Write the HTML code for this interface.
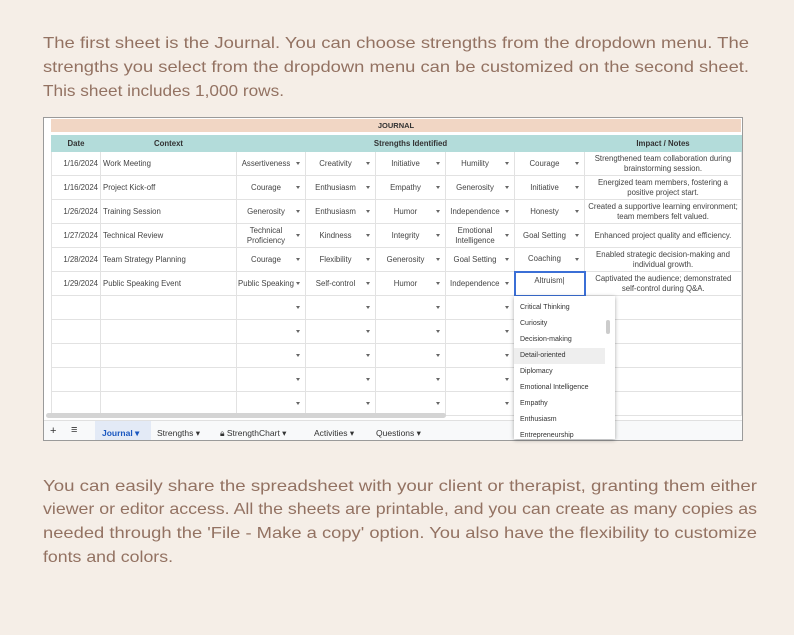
<!DOCTYPE html>
<html><head><style>
*{margin:0;padding:0;box-sizing:border-box}
body{width:794px;height:635px;background:#f5eee7;position:relative;overflow:hidden;font-family:"Liberation Sans",sans-serif}
svg.p{position:absolute;left:0;top:0}
.box{position:absolute;left:43px;top:117px;width:700px;height:324px;background:#fff;border:1px solid #9a9a9a;overflow:hidden}
.jb{position:absolute;left:7px;top:1px;width:690px;height:13px;background:#f1d6c4;font-size:7.5px;font-weight:bold;color:#333;text-align:center;line-height:13px}
table{position:absolute;left:7px;top:17px;border-collapse:collapse;table-layout:fixed;font-size:7.8px;color:#444}
td{border:1px solid #e2e2e2;height:24px;position:relative;text-align:center;line-height:10px;padding:0 2px}
tr.h td{height:16px;background:#b3dcda;font-weight:bold;color:#333;border-color:#b3dcda}
td.l{text-align:left}
td.r{text-align:right}
td.d::after{content:"";position:absolute;right:5px;top:10px;border:2.5px solid transparent;border-top:3px solid #666}
td.d{padding-right:12px}
td.nw{white-space:nowrap;padding-left:0;padding-right:10px}
.tabs{position:absolute;left:0;top:302px;width:700px;height:22px;background:#f8f9fa;border-top:1px solid #e0e0e0;font-size:8.5px;color:#333}
.tabs span{position:absolute;top:7px}
.sb{position:absolute;left:2px;top:295px;width:400px;height:5px;background:#d4d4d4;border-radius:3px}
.dd{position:absolute;left:514px;top:296px;width:101px;height:143px;background:#fff;box-shadow:0 1px 4px rgba(0,0,0,.35);font-size:7px;color:#333;overflow:hidden}
.dd div{height:16px;line-height:16px;padding-left:6px}
</style></head><body>
<svg class="p" width="794" height="635" font-family="Liberation Sans, sans-serif" font-size="16" fill="#937262">
<text x="43" y="48" textLength="706" lengthAdjust="spacingAndGlyphs">The first sheet is the Journal. You can choose strengths from the dropdown menu. The</text>
<text x="43" y="72" textLength="706" lengthAdjust="spacingAndGlyphs">strengths you select from the dropdown menu can be customized on the second sheet.</text>
<text x="43" y="96" textLength="241" lengthAdjust="spacingAndGlyphs">This sheet includes 1,000 rows.</text>
<text x="43" y="491" textLength="714" lengthAdjust="spacingAndGlyphs">You can easily share the spreadsheet with your client or therapist, granting them either</text>
<text x="43" y="514" textLength="714" lengthAdjust="spacingAndGlyphs">viewer or editor access. All the sheets are printable, and you can create as many copies as</text>
<text x="43" y="538" textLength="714" lengthAdjust="spacingAndGlyphs">needed through the 'File - Make a copy' option. You also have the flexibility to customize</text>
<text x="43" y="562" textLength="130" lengthAdjust="spacingAndGlyphs">fonts and colors.</text>
</svg>
<div class="box">
<div class="jb">JOURNAL</div>
<table>
<colgroup><col style="width:49px"><col style="width:136px"><col style="width:69px"><col style="width:70px"><col style="width:70px"><col style="width:69px"><col style="width:70px"><col style="width:157px"></colgroup>
<tr class="h"><td>Date</td><td>Context</td><td colspan="5" style="text-align:center">Strengths Identified</td><td>Impact / Notes</td></tr>
<tr><td class="r">1/16/2024</td><td class="l">Work Meeting</td><td class="d">Assertiveness</td><td class="d">Creativity</td><td class="d">Initiative</td><td class="d">Humility</td><td class="d">Courage</td><td>Strengthened team collaboration during brainstorming session.</td></tr>
<tr><td class="r">1/16/2024</td><td class="l">Project Kick-off</td><td class="d">Courage</td><td class="d">Enthusiasm</td><td class="d">Empathy</td><td class="d">Generosity</td><td class="d">Initiative</td><td>Energized team members, fostering a positive project start.</td></tr>
<tr><td class="r">1/26/2024</td><td class="l">Training Session</td><td class="d">Generosity</td><td class="d">Enthusiasm</td><td class="d">Humor</td><td class="d">Independence</td><td class="d">Honesty</td><td>Created a supportive learning environment; team members felt valued.</td></tr>
<tr><td class="r">1/27/2024</td><td class="l">Technical Review</td><td class="d">Technical Proficiency</td><td class="d">Kindness</td><td class="d">Integrity</td><td class="d">Emotional Intelligence</td><td class="d">Goal Setting</td><td>Enhanced project quality and efficiency.</td></tr>
<tr><td class="r">1/28/2024</td><td class="l">Team Strategy Planning</td><td class="d">Courage</td><td class="d">Flexibility</td><td class="d">Generosity</td><td class="d">Goal Setting</td><td class="d">Coaching</td><td>Enabled strategic decision-making and individual growth.</td></tr>
<tr><td class="r">1/29/2024</td><td class="l">Public Speaking Event</td><td class="d nw">Public Speaking</td><td class="d">Self-control</td><td class="d">Humor</td><td class="d">Independence</td><td style="border:2px solid #3b6fd6;vertical-align:top;padding-top:3px">Altruism|</td><td>Captivated the audience; demonstrated self-control during Q&amp;A.</td></tr>
<tr><td></td><td></td><td class="d"></td><td class="d"></td><td class="d"></td><td class="d"></td><td></td><td></td></tr>
<tr><td></td><td></td><td class="d"></td><td class="d"></td><td class="d"></td><td class="d"></td><td></td><td></td></tr>
<tr><td></td><td></td><td class="d"></td><td class="d"></td><td class="d"></td><td class="d"></td><td></td><td></td></tr>
<tr><td></td><td></td><td class="d"></td><td class="d"></td><td class="d"></td><td class="d"></td><td></td><td></td></tr>
<tr><td></td><td></td><td class="d"></td><td class="d"></td><td class="d"></td><td class="d"></td><td></td><td></td></tr>
</table>
<div class="sb"></div>
<div class="tabs">
<span style="left:6px;font-size:11px;top:4px">+</span>
<span style="left:27px;font-size:11px;top:3px">≡</span>
<div style="position:absolute;left:51px;top:0;width:56px;height:21px;background:#e3eaf6"></div>
<span style="left:58px;color:#1a57c0;font-weight:bold">Journal ▾</span>
<span style="left:113px">Strengths ▾</span>
<span style="left:176px">🔒︎ StrengthChart ▾</span>
<span style="left:270px">Activities ▾</span>
<span style="left:332px">Questions ▾</span>
</div>
</div>
<div class="dd">
<div style="margin-top:4px">Critical Thinking</div><div>Curiosity</div><div>Decision-making</div><div style="background:#eeeeee;margin-right:10px">Detail-oriented</div><div>Diplomacy</div><div>Emotional Intelligence</div><div>Empathy</div><div>Enthusiasm</div><div>Entrepreneurship</div>
<span style="position:absolute;left:92px;top:24px;width:4px;height:14px;background:#ccc;border-radius:2px"></span>
</div>
</body></html>
